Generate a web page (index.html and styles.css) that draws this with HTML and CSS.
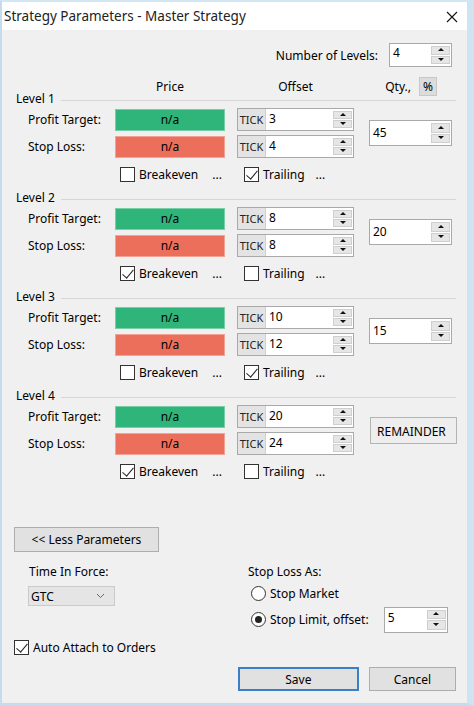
FILE: index.html
```html
<!DOCTYPE html>
<html>
<head>
<meta charset="utf-8">
<link rel="stylesheet" href="styles.css">
</head>
<body>
<div class="window">
  <div class="titlebar">
    <span class="title">Strategy Parameters - Master Strategy</span>
    <svg class="close" width="12" height="12" viewBox="0 0 12 12"><path d="M1 1 L11 11 M11 1 L1 11" stroke="#111" stroke-width="1.1" fill="none"/></svg>
  </div>
  <div class="content">
    <div class="levels-row">
      <span class="lbl">Number of Levels:</span>
      <div class="spin num-levels"><span class="val">4</span><div class="arrows"><span class="up"></span><span class="down"></span></div></div>
    </div>

    <div class="grid header">
      <span></span>
      <span class="hcenter">Price</span>
      <span class="hcenter">Offset</span>
      <span class="qtyhead">Qty., <span class="pct">%</span></span>
    </div>

    <div class="level">
      <div class="level-title"><span>Level 1</span><i class="rule"></i></div>
      <div class="grid rows">
        <span class="rlabel">Profit Target:</span>
        <div class="price green">n/a</div>
        <div class="spin tick"><span class="tag">TICK</span><span class="val">3</span><div class="arrows"><span class="up"></span><span class="down"></span></div></div>
        <div class="spin qty"><span class="val">45</span><div class="arrows"><span class="up"></span><span class="down"></span></div></div>
        <span class="rlabel">Stop Loss:</span>
        <div class="price red">n/a</div>
        <div class="spin tick"><span class="tag">TICK</span><span class="val">4</span><div class="arrows"><span class="up"></span><span class="down"></span></div></div>
      </div>
      <div class="grid checks">
        <span></span>
        <div class="chk-item"><span class="cb"></span><span class="cbtext">Breakeven</span><span class="dots">...</span></div>
        <div class="chk-item trail"><span class="cb on"></span><span class="cbtext">Trailing</span><span class="dots">...</span></div>
      </div>
    </div>

    <div class="level">
      <div class="level-title"><span>Level 2</span><i class="rule"></i></div>
      <div class="grid rows">
        <span class="rlabel">Profit Target:</span>
        <div class="price green">n/a</div>
        <div class="spin tick"><span class="tag">TICK</span><span class="val">8</span><div class="arrows"><span class="up"></span><span class="down"></span></div></div>
        <div class="spin qty"><span class="val">20</span><div class="arrows"><span class="up"></span><span class="down"></span></div></div>
        <span class="rlabel">Stop Loss:</span>
        <div class="price red">n/a</div>
        <div class="spin tick"><span class="tag">TICK</span><span class="val">8</span><div class="arrows"><span class="up"></span><span class="down"></span></div></div>
      </div>
      <div class="grid checks">
        <span></span>
        <div class="chk-item"><span class="cb on"></span><span class="cbtext">Breakeven</span><span class="dots">...</span></div>
        <div class="chk-item trail"><span class="cb"></span><span class="cbtext">Trailing</span><span class="dots">...</span></div>
      </div>
    </div>

    <div class="level">
      <div class="level-title"><span>Level 3</span><i class="rule"></i></div>
      <div class="grid rows">
        <span class="rlabel">Profit Target:</span>
        <div class="price green">n/a</div>
        <div class="spin tick"><span class="tag">TICK</span><span class="val">10</span><div class="arrows"><span class="up"></span><span class="down"></span></div></div>
        <div class="spin qty"><span class="val">15</span><div class="arrows"><span class="up"></span><span class="down"></span></div></div>
        <span class="rlabel">Stop Loss:</span>
        <div class="price red">n/a</div>
        <div class="spin tick"><span class="tag">TICK</span><span class="val">12</span><div class="arrows"><span class="up"></span><span class="down"></span></div></div>
      </div>
      <div class="grid checks">
        <span></span>
        <div class="chk-item"><span class="cb"></span><span class="cbtext">Breakeven</span><span class="dots">...</span></div>
        <div class="chk-item trail"><span class="cb on"></span><span class="cbtext">Trailing</span><span class="dots">...</span></div>
      </div>
    </div>

    <div class="level">
      <div class="level-title"><span>Level 4</span><i class="rule"></i></div>
      <div class="grid rows">
        <span class="rlabel">Profit Target:</span>
        <div class="price green">n/a</div>
        <div class="spin tick"><span class="tag">TICK</span><span class="val">20</span><div class="arrows"><span class="up"></span><span class="down"></span></div></div>
        <div class="remainder">REMAINDER</div>
        <span class="rlabel">Stop Loss:</span>
        <div class="price red">n/a</div>
        <div class="spin tick"><span class="tag">TICK</span><span class="val">24</span><div class="arrows"><span class="up"></span><span class="down"></span></div></div>
      </div>
      <div class="grid checks">
        <span></span>
        <div class="chk-item"><span class="cb on"></span><span class="cbtext">Breakeven</span><span class="dots">...</span></div>
        <div class="chk-item trail"><span class="cb"></span><span class="cbtext">Trailing</span><span class="dots">...</span></div>
      </div>
    </div>

    <div class="less-btn">&lt;&lt; Less Parameters</div>

    <div class="bottom">
      <div class="tif">
        <span class="lbl">Time In Force:</span>
        <div class="select"><span>GTC</span><svg width="9" height="6" viewBox="0 0 9 6"><path d="M1 1 L4.5 4.5 L8 1" stroke="#666" stroke-width="1" fill="none"/></svg></div>
      </div>
      <div class="sla">
        <span class="lbl">Stop Loss As:</span>
        <div class="radio-row"><span class="radio"></span><span>Stop Market</span></div>
        <div class="radio-row"><span class="radio on"></span><span>Stop Limit, offset:</span>
          <div class="spin offset"><span class="val">5</span><div class="arrows"><span class="up"></span><span class="down"></span></div></div>
        </div>
      </div>
    </div>

    <div class="auto"><span class="cb on"></span><span>Auto Attach to Orders</span></div>

    <div class="actions">
      <div class="btn save">Save</div>
      <div class="btn cancel">Cancel</div>
    </div>
  </div>
</div>
</body>
</html>
```
FILE: styles.css
```css
* { box-sizing: border-box; }
html, body { margin: 0; padding: 0; }
body {
  font-family: "Noto Sans", "Open Sans", sans-serif;
  font-size: 12px;
  color: #000;
  background: #cfe3f2;
}
.window {
  width: 474px;
  height: 706px;
  border-left: 2px solid #c3dcef;
  border-right: 7px solid #cfe4f3;
  border-bottom: 3px solid #c3dcef;
  border-top: 2px solid #d3e6f4;
  background: #f0f0f0;
  display: flex;
  flex-direction: column;
  overflow: hidden;
}
.titlebar {
  height: 28px;
  background: #fff;
  display: flex;
  align-items: center;
  justify-content: space-between;
  padding: 0 9px 0 2px;
  flex: none;
}
.title { font-size: 13.5px; color: #222; }
.close { margin-top: 1px; }

.content {
  padding: 13px 11px 0 12px;
  display: flex;
  flex-direction: column;
}

.levels-row {
  display: flex;
  justify-content: flex-end;
  align-items: center;
  gap: 11px;
  padding-right: 4px;
  height: 24px;
}

/* spinners */
.spin {
  display: flex;
  align-items: stretch;
  background: #fff;
  border: 1px solid #a9a9a9;
}
.spin .val { flex: 1; padding: 1px 0 0 3px; line-height: 15px; }
.spin .arrows {
  width: 20px;
  display: flex;
  flex-direction: column;
  justify-content: center;
  gap: 1px;
  padding: 2px 1px 2px 0;
}
.spin .arrows span {
  flex: 1;
  background: #e6e6e6;
  border: 1px solid #cfcfcf;
  position: relative;
  max-height: 10px;
}
.spin .arrows span::after {
  content: "";
  position: absolute;
  left: 50%;
  top: 50%;
  margin-left: -3px;
  margin-top: -2px;
  border-left: 3px solid transparent;
  border-right: 3px solid transparent;
}
.spin .arrows .up::after { border-bottom: 3px solid #111; }
.spin .arrows .down::after { border-top: 3px solid #111; }

.num-levels { width: 63px; height: 24px; }

.grid {
  display: grid;
  grid-template-columns: 75px 110px 117px 86px;
  column-gap: 12px;
  padding-left: 14px;
}

.header {
  margin-top: 10px;
  height: 19px;
  align-items: center;
  margin-bottom: -6px;
}
.hcenter { text-align: center; }
.qtyhead {
  display: flex;
  align-items: center;
  justify-content: flex-end;
  gap: 8px;
  padding-right: 15px;
}
.pct {
  width: 18px;
  height: 19px;
  background: #dcdcdc;
  border: 1px solid #c8c8c8;
  display: flex;
  align-items: center;
  justify-content: center;
  font-size: 12px;
}

.level { display: flex; flex-direction: column; margin-bottom: 7px; }
.level-title {
  display: flex;
  align-items: center;
  height: 16px;
  padding-left: 2px;
}
.level-title .rule {
  flex: 1;
  height: 1px;
  background: #d6d6d6;
  margin-left: 6px;
  margin-top: 4px;
}
.rows {
  margin-top: 2px;
  grid-template-rows: 23px 23px;
  row-gap: 4px;
  align-items: center;
}
.price {
  height: 22px;
  display: flex;
  align-items: center;
  justify-content: center;
  border: 1px solid rgba(255,255,255,0.35);
}
.price.green { background: #2fb57a; }
.price.red { background: #ec6f5c; }
.tick { height: 23px; }
.tick .tag {
  width: 28px;
  background: #e3e3e3;
  border-right: 1px solid #d0d0d0;
  font-size: 11px;
  display: flex;
  align-items: center;
  justify-content: center;
  color: #222;
}
.tick .val { padding-top: 2px; }
.qty {
  grid-column: 4;
  grid-row: 1 / span 2;
  height: 26px;
  width: 83px;
  margin-left: 3px;
}
.qty .val { padding-top: 4px; }
.remainder {
  grid-column: 4;
  grid-row: 1 / span 2;
  height: 27px;
  width: 87px;
  margin-left: 4px;
  background: #eeeeee;
  border: 1px solid #b4b4b4;
  padding: 5px 0 0 6px;
}

.checks { margin-top: 8px; height: 16px; align-items: center; }
.chk-item { display: flex; align-items: center; padding-left: 5px; }
.chk-item.trail { padding-left: 7px; }
.cb {
  width: 15px;
  height: 15px;
  border: 1px solid #333;
  background: #fff;
  position: relative;
  flex: none;
  margin-right: 4px;
}
.cb.on::after {
  content: "";
  position: absolute;
  left: 4px;
  top: 0px;
  width: 5px;
  height: 10px;
  border-right: 1px solid #222;
  border-bottom: 1px solid #222;
  transform: rotate(40deg);
}
.dots { margin-left: 14px; }
.chk-item.trail .dots { margin-left: 11px; }

.less-btn {
  margin-top: 41px;
  width: 145px;
  height: 25px;
  background: #e1e1e1;
  border: 1px solid #adadad;
  display: flex;
  align-items: center;
  justify-content: center;
}

.bottom {
  display: grid;
  grid-template-columns: 220px 1fr;
  margin-top: 11px;
  padding-left: 14px;
}
.tif, .sla { display: flex; flex-direction: column; }
.tif .lbl { margin-left: 1px; }
.select {
  margin-top: 6px;
  width: 87px;
  height: 20px;
  background: #e5e5e5;
  border: 1px solid #cacaca;
  display: flex;
  align-items: center;
  justify-content: space-between;
  padding: 0 9px 0 2px;
}
.sla .lbl { margin-bottom: 2px; }
.radio-row { display: flex; align-items: center; height: 23px; padding-left: 3px; }
.radio-row + .radio-row { margin-top: 3px; }
.radio {
  width: 15px;
  height: 15px;
  border: 1px solid #333;
  border-radius: 50%;
  background: #fff;
  margin-right: 4px;
  position: relative;
}
.radio.on::after {
  content: "";
  position: absolute;
  left: 3px;
  top: 3px;
  width: 7px;
  height: 7px;
  border-radius: 50%;
  background: #222;
}
.offset { width: 64px; height: 26px; margin-left: 15px; }
.offset .val { padding-top: 2px; }

.auto {
  display: flex;
  align-items: center;
  margin-top: 8px;
}
.actions {
  display: flex;
  gap: 10px;
  margin-top: 11px;
  padding-left: 224px;
}
.btn {
  height: 24px;
  display: flex;
  align-items: center;
  justify-content: center;
  background: #e1e1e1;
  border: 1px solid #adadad;
}
.btn.save { width: 123px; border: 2px solid #3b7fc4; }
.btn.cancel { width: 89px; }
```
